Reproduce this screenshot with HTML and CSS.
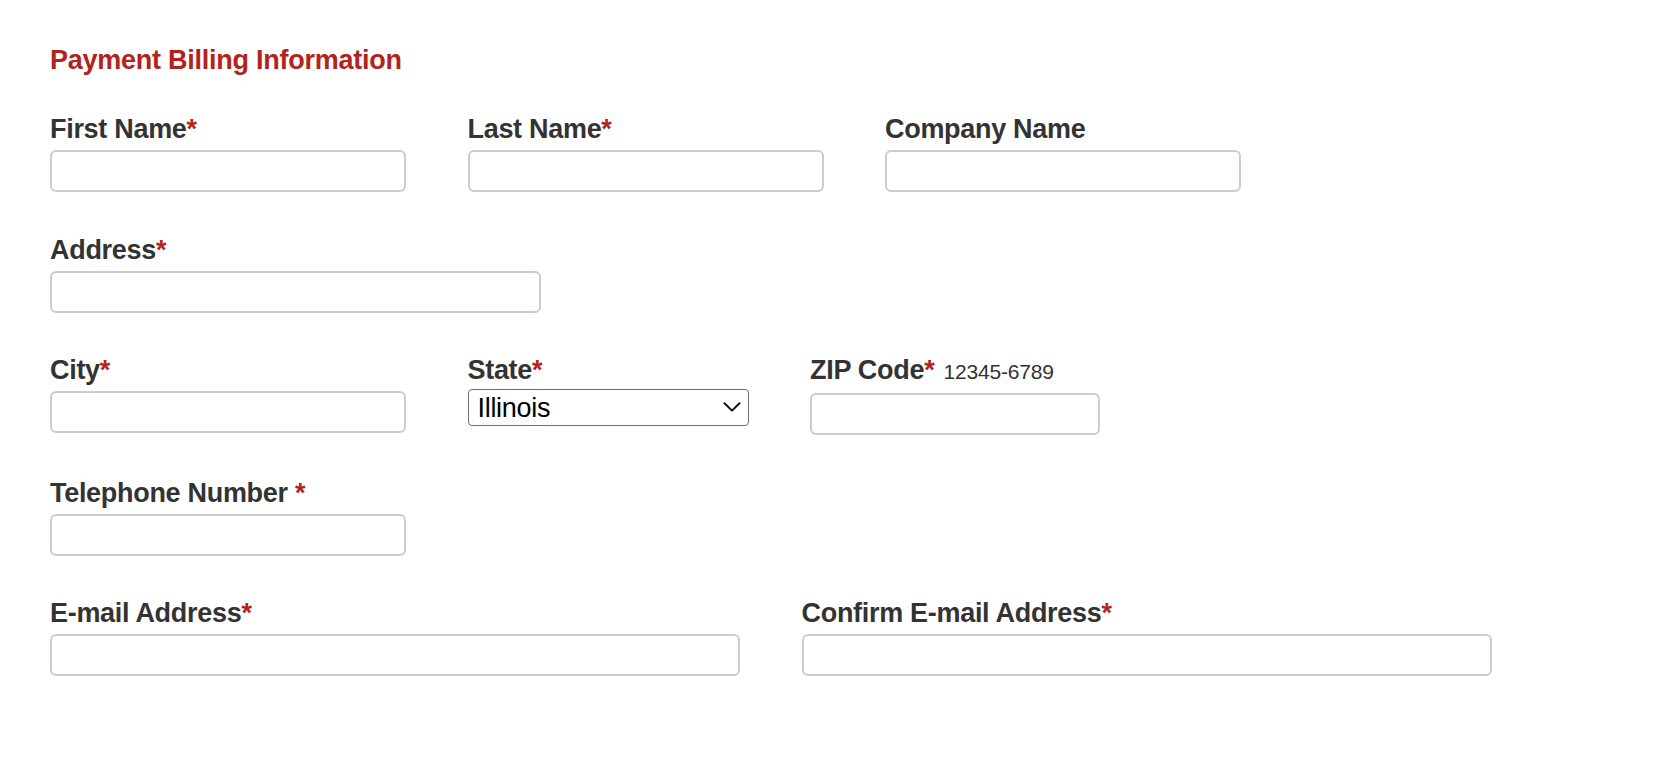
FILE: index.html
```html
<!DOCTYPE html>
<html lang="en">
<head>
<meta charset="utf-8">
<title>Payment Billing Information</title>
<link rel="stylesheet" href="styles.css">
</head>
<body>
<form class="billing">
  <h2 class="billing-title">Payment Billing Information</h2>
  <div class="rows">
    <div class="row">
      <div class="field">
        <label class="label" for="fname">First Name<span class="req">*</span></label>
        <input class="input w-md" id="fname" type="text">
      </div>
      <div class="field">
        <label class="label" for="lname">Last Name<span class="req">*</span></label>
        <input class="input w-md" id="lname" type="text">
      </div>
      <div class="field">
        <label class="label" for="company">Company Name</label>
        <input class="input w-md" id="company" type="text">
      </div>
    </div>
    <div class="row">
      <div class="field">
        <label class="label" for="address">Address<span class="req">*</span></label>
        <input class="input w-addr" id="address" type="text">
      </div>
    </div>
    <div class="row">
      <div class="field">
        <label class="label" for="city">City<span class="req">*</span></label>
        <input class="input w-md" id="city" type="text">
      </div>
      <div class="field">
        <label class="label" for="state">State<span class="req">*</span></label>
        <div class="select-wrap">
          <select class="select" id="state">
            <option>Illinois</option>
          </select>
          <svg class="chevron" width="18" height="10" viewBox="0 0 18 10" aria-hidden="true"><path d="M1.5 1.2 L9 8.6 L16.5 1.2" fill="none" stroke="#111" stroke-width="2" stroke-linecap="round" stroke-linejoin="round"/></svg>
        </div>
      </div>
      <div class="field">
        <label class="label" for="zip">ZIP Code<span class="req">*</span> <span class="hint">12345-6789</span></label>
        <input class="input w-zip" id="zip" type="text">
      </div>
    </div>
    <div class="row">
      <div class="field">
        <label class="label" for="phone">Telephone Number <span class="req">*</span></label>
        <input class="input w-md" id="phone" type="text">
      </div>
    </div>
    <div class="row">
      <div class="field">
        <label class="label" for="email">E-mail Address<span class="req">*</span></label>
        <input class="input w-lg" id="email" type="text">
      </div>
      <div class="field">
        <label class="label" for="email2">Confirm E-mail Address<span class="req">*</span></label>
        <input class="input w-lg" id="email2" type="text">
      </div>
    </div>
  </div>
</form>
</body>
</html>
```
FILE: styles.css
```css
html, body {
  margin: 0;
  padding: 0;
  background: #ffffff;
}

body {
  font-family: "Liberation Sans", Arial, Helvetica, sans-serif;
  color: #333333;
}

.billing {
  padding: 44px 0 0 50px;
}

.billing-title {
  margin: 0 0 37px;
  font-size: 27px;
  line-height: 32px;
  font-weight: 700;
  letter-spacing: -0.25px;
  color: #b3221b;
}

.rows {
  display: flex;
  flex-direction: column;
  gap: 41.5px;
}

.row {
  display: flex;
  align-items: flex-start;
  column-gap: 61.5px;
}

.field {
  display: flex;
  flex-direction: column;
}

.label {
  display: block;
  font-size: 27px;
  line-height: 32px;
  font-weight: 700;
  letter-spacing: -0.3px;
  color: #333333;
  white-space: nowrap;
}

.req {
  color: #b3221b;
}

.hint {
  margin-left: 2px;
  font-size: 21px;
  font-weight: 400;
  letter-spacing: -0.2px;
  color: #333333;
}

.input {
  box-sizing: border-box;
  height: 42px;
  margin: 5px 0 0;
  padding: 0 8px;
  border: 2px solid #cccccc;
  border-radius: 6px;
  background: #ffffff;
  font-family: inherit;
  font-size: 20px;
  outline: none;
}

.w-md { width: 356px; }
.w-addr { width: 491px; }
.w-zip { width: 290px; }
.w-lg { width: 690px; }

.select-wrap {
  position: relative;
  margin-top: 3px;
  width: 281px;
  height: 37px;
}

.select {
  box-sizing: border-box;
  appearance: none;
  -webkit-appearance: none;
  width: 281px;
  height: 37px;
  margin: 0;
  padding: 0 30px 0 9px;
  border: 1.5px solid #6f6f6f;
  border-radius: 4px;
  background: #ffffff;
  color: #000000;
  font-family: "Liberation Sans", Arial, Helvetica, sans-serif;
  font-size: 27px;
  letter-spacing: -0.3px;
  line-height: 32px;
  outline: none;
}

.chevron {
  position: absolute;
  right: 8px;
  top: 13px;
  pointer-events: none;
}
```
